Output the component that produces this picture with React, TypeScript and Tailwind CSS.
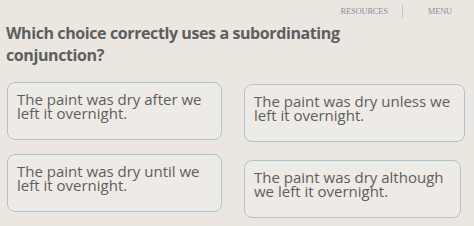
import React from 'react'

const choices = [
  { text: 'The paint was dry after we left it overnight.', cls: '' },
  { text: 'The paint was dry unless we left it overnight.', cls: 'mt-[2px] mb-[-4px]' },
  { text: 'The paint was dry until we left it overnight.', cls: '' },
  { text: 'The paint was dry although we left it overnight.', cls: 'mt-[6px] mb-[-8px] mr-[4px]' },
]

export default function App() {
  return (
    <div className="w-[474px] h-[226px] overflow-hidden bg-[#ebe6e0] text-[#5b5b5b]" style={{ fontFamily: '"Open Sans", sans-serif' }}>
      {/* Top nav */}
      <div className="flex items-center justify-end h-[22px] pr-[22px] text-[#8391a6] text-[8.5px] tracking-tight" style={{ fontFamily: '"Liberation Serif", serif' }}>
        <span>RESOURCES</span>
        <span className="mx-[14px] w-px h-[13px] bg-[#bfc5cc]" />
        <span className="ml-[11px]">MENU</span>
      </div>

      {/* Question */}
      <h1 className="px-[6px] mt-0 text-[16px] leading-[22px] tracking-[-0.4px] font-bold text-[#5e5e5e]">
        Which choice correctly uses a subordinating
        <br />
        conjunction?
      </h1>

      {/* Choices */}
      <div className="grid grid-cols-[215px_221px] gap-x-[22px] gap-y-[14px] pl-[7px] mt-[16px]">
        {choices.map((c) => (
          <div
            key={c.text}
            className={`h-[58px] rounded-[8px] border-[1.5px] border-[#a9c5d2] bg-[#eeeae5] px-[9px] pt-[9px] text-[15px] leading-[14px] text-[#5e5e5e] ${c.cls}`}
          >
            {c.text}
          </div>
        ))}
      </div>
    </div>
  )
}
